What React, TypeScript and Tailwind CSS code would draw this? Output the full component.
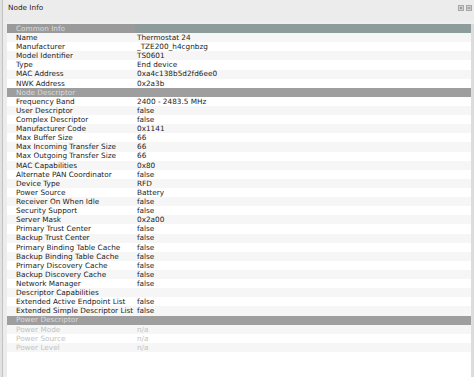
import React from "react";

type Row = { label: string; value?: string; header?: boolean; disabled?: boolean; split?: boolean };

const rows: Row[] = [
  { label: "Common Info", header: true, split: true },
  { label: "Name", value: "Thermostat 24" },
  { label: "Manufacturer", value: "_TZE200_h4cgnbzg" },
  { label: "Model Identifier", value: "TS0601" },
  { label: "Type", value: "End device" },
  { label: "MAC Address", value: "0xa4c138b5d2fd6ee0" },
  { label: "NWK Address", value: "0x2a3b" },
  { label: "Node Descriptor", header: true },
  { label: "Frequency Band", value: "2400 - 2483.5 MHz" },
  { label: "User Descriptor", value: "false" },
  { label: "Complex Descriptor", value: "false" },
  { label: "Manufacturer Code", value: "0x1141" },
  { label: "Max Buffer Size", value: "66" },
  { label: "Max Incoming Transfer Size", value: "66" },
  { label: "Max Outgoing Transfer Size", value: "66" },
  { label: "MAC Capabilities", value: "0x80" },
  { label: "Alternate PAN Coordinator", value: "false" },
  { label: "Device Type", value: "RFD" },
  { label: "Power Source", value: "Battery" },
  { label: "Receiver On When Idle", value: "false" },
  { label: "Security Support", value: "false" },
  { label: "Server Mask", value: "0x2a00" },
  { label: "Primary Trust Center", value: "false" },
  { label: "Backup Trust Center", value: "false" },
  { label: "Primary Binding Table Cache", value: "false" },
  { label: "Backup Binding Table Cache", value: "false" },
  { label: "Primary Discovery Cache", value: "false" },
  { label: "Backup Discovery Cache", value: "false" },
  { label: "Network Manager", value: "false" },
  { label: "Descriptor Capabilities", value: "" },
  { label: "Extended Active Endpoint List", value: "false" },
  { label: "Extended Simple Descriptor List", value: "false" },
  { label: "Power Descriptor", header: true },
  { label: "Power Mode", value: "n/a", disabled: true },
  { label: "Power Source", value: "n/a", disabled: true },
  { label: "Power Level", value: "n/a", disabled: true },
];

function TableRow({ row, index }: { row: Row; index: number }) {
  if (row.header) {
    return (
      <div className="flex h-[9.12px] items-center">
        <div className={`w-[128px] h-full flex items-center pl-[9px] ${row.split ? "bg-[#9a9a9a]" : "bg-[#9e9e9e]"}`}>
          <span className="text-[#dadada] whitespace-nowrap">{row.label}</span>
        </div>
        <div className={`flex-1 h-full ${row.split ? "bg-[#8d9b9b]" : "bg-[#9e9e9e]"}`} />
      </div>
    );
  }
  const bg = index % 2 === 1 ? "bg-[#f6f6f6]" : "bg-white";
  const color = row.disabled ? "text-[#c2c2c2]" : "text-[#1c1c1c]";
  return (
    <div className={`flex h-[9.12px] items-center ${bg} ${color}`}>
      <div className="w-[128px] pl-[9px] whitespace-nowrap">{row.label}</div>
      <div className="flex-1 pl-[2px] whitespace-nowrap">{row.value}</div>
    </div>
  );
}

export default function App() {
  return (
    <div
      className="w-[474px] h-[377px] flex bg-[#ececec] overflow-hidden text-[7.3px] leading-none"
      style={{ fontFamily: '"DejaVu Sans", "Liberation Sans", sans-serif' }}
    >
      <div className="w-[2px] bg-[#e2e2e2]" />
      <div className="w-px bg-[#c2c2c2]" />
      <div className="flex-1 flex flex-col">
        <div className="h-[22px] flex items-start justify-between pl-[5px] pr-[2px] pt-[3px]">
          <span className="text-[#1c1c1c] text-[7.3px] mt-[0.5px]">Node Info</span>
          <div className="flex gap-[2px] mt-[2px]">
            <svg width="6" height="6" viewBox="0 0 6 6">
              <rect x="0.5" y="0.5" width="5" height="5" fill="#d0d0d0" stroke="#a8a8a8" />
              <rect x="2" y="2" width="2" height="2" fill="#999" />
            </svg>
            <svg width="6" height="6" viewBox="0 0 6 6">
              <rect x="0.5" y="0.5" width="5" height="5" fill="#d0d0d0" stroke="#a8a8a8" />
              <path d="M1.5 3H4.5" stroke="#888" />
            </svg>
          </div>
        </div>
        <div className="h-[2px] bg-[#efefef]" />
        <div className="flex-1 flex">
          <div className="w-[4px]" />
          <div className="flex-1 bg-white flex flex-col">
            {rows.map((r, i) => (
              <TableRow key={i} row={r} index={i} />
            ))}
          </div>
          <div className="w-[3px] bg-[#dcdcdc]" />
        </div>
      </div>
    </div>
  );
}
